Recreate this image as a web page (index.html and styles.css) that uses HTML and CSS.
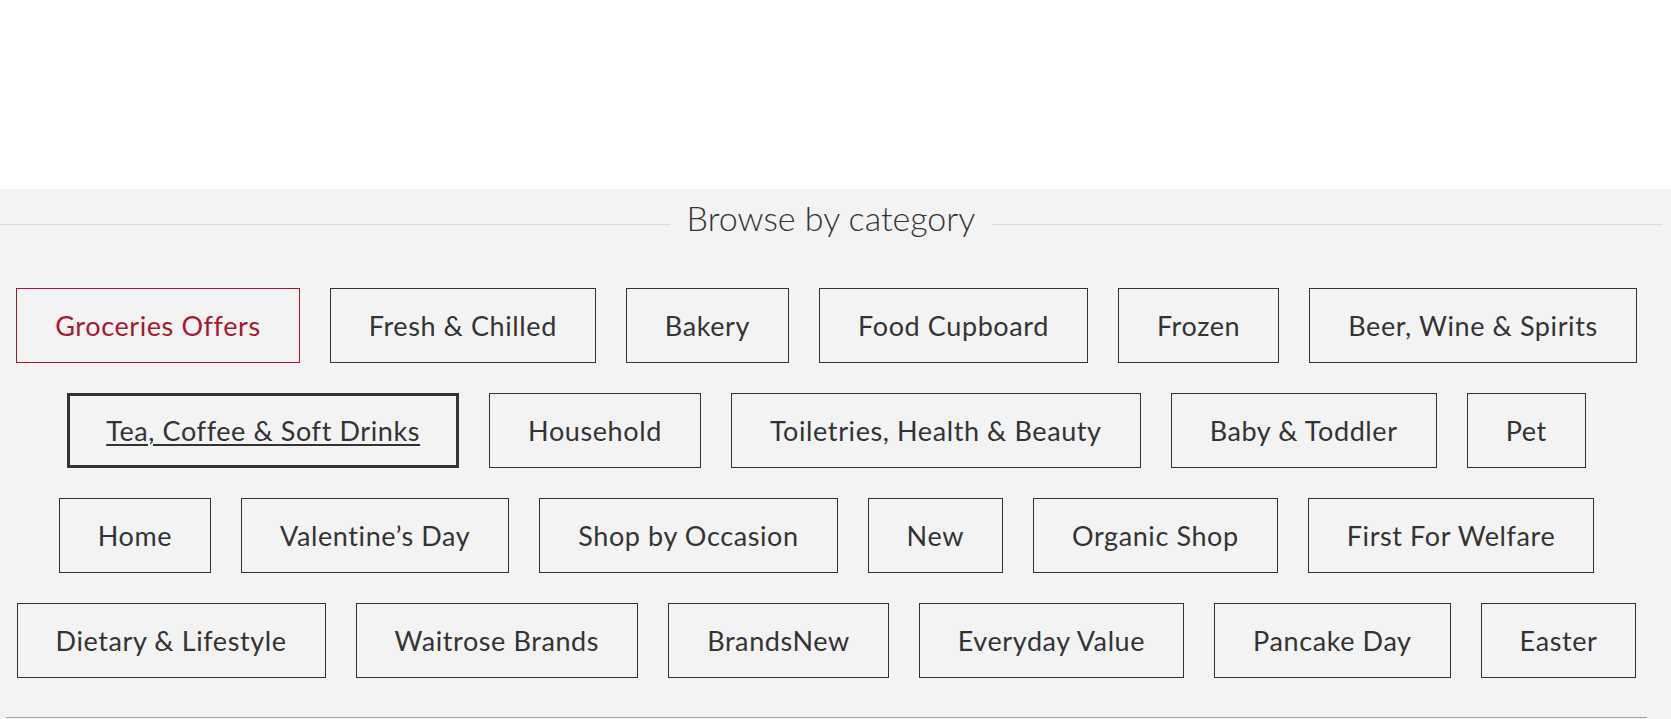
FILE: index.html
```html
<!DOCTYPE html>
<html lang="en">
<head>
<meta charset="utf-8">
<title>Browse by category</title>
<link rel="stylesheet" href="styles.css">
</head>
<body>
<div class="top-space"></div>
<section class="browse">
  <div class="browse-heading">
    <span class="rule"></span>
    <h2 class="browse-title">Browse by category</h2>
    <span class="rule"></span>
  </div>
  <nav class="category-wrap">
    <div class="category-row">
      <a class="cat cat-offers" href="#">Groceries Offers</a>
      <a class="cat" href="#">Fresh &amp; Chilled</a>
      <a class="cat" href="#">Bakery</a>
      <a class="cat" href="#">Food Cupboard</a>
      <a class="cat" href="#">Frozen</a>
      <a class="cat" href="#">Beer, Wine &amp; Spirits</a>
    </div>
    <div class="category-row">
      <a class="cat cat-focus" href="#">Tea, Coffee &amp; Soft Drinks</a>
      <a class="cat" href="#">Household</a>
      <a class="cat" href="#">Toiletries, Health &amp; Beauty</a>
      <a class="cat" href="#">Baby &amp; Toddler</a>
      <a class="cat" href="#">Pet</a>
    </div>
    <div class="category-row">
      <a class="cat" href="#">Home</a>
      <a class="cat" href="#">Valentine’s Day</a>
      <a class="cat" href="#">Shop by Occasion</a>
      <a class="cat" href="#">New</a>
      <a class="cat" href="#">Organic Shop</a>
      <a class="cat" href="#">First For Welfare</a>
    </div>
    <div class="category-row">
      <a class="cat" href="#">Dietary &amp; Lifestyle</a>
      <a class="cat" href="#">Waitrose Brands</a>
      <a class="cat" href="#">BrandsNew</a>
      <a class="cat" href="#">Everyday Value</a>
      <a class="cat" href="#">Pancake Day</a>
      <a class="cat" href="#">Easter</a>
    </div>
  </nav>
</section>
</body>
</html>
```
FILE: styles.css
```css
html, body {
  margin: 0;
  padding: 0;
  background: #ffffff;
}

body {
  font-family: Lato, "Open Sans", "Liberation Sans", sans-serif;
  color: #333333;
}

.top-space {
  height: 189px;
}

.browse {
  background: #f3f3f3;
  padding-bottom: 10px;
}

.browse-heading {
  display: flex;
  align-items: center;
  width: 1662px;
  height: 70px;
}

.rule {
  flex: 1;
  height: 1px;
  background: #dddddd;
}

.browse-title {
  margin: 0 17px;
  padding-bottom: 12px;
  font-weight: 300;
  font-size: 34px;
  line-height: 40px;
  color: #333333;
  white-space: nowrap;
}

.category-wrap {
  display: flex;
  flex-direction: column;
  gap: 30px;
  width: 1641px;
  margin-left: 6px;
  padding: 29px 0 39px;
  border-bottom: 1px solid #a3a3a3;
}

.category-row {
  display: flex;
  justify-content: center;
  gap: 30px;
}

.cat {
  display: flex;
  align-items: center;
  justify-content: center;
  box-sizing: border-box;
  height: 75px;
  padding: 0 38px;
  border: 1px solid #333333;
  color: #333333;
  font-size: 27px;
  letter-spacing: 0.6px;
  text-decoration: none;
  white-space: nowrap;
}

.cat-offers {
  border-color: #a6192e;
  color: #a6192e;
}

.cat-focus {
  border-width: 3px;
  padding: 0 36px;
  text-decoration: underline;
  text-decoration-thickness: 2px;
  text-underline-offset: 3px;
}
```
